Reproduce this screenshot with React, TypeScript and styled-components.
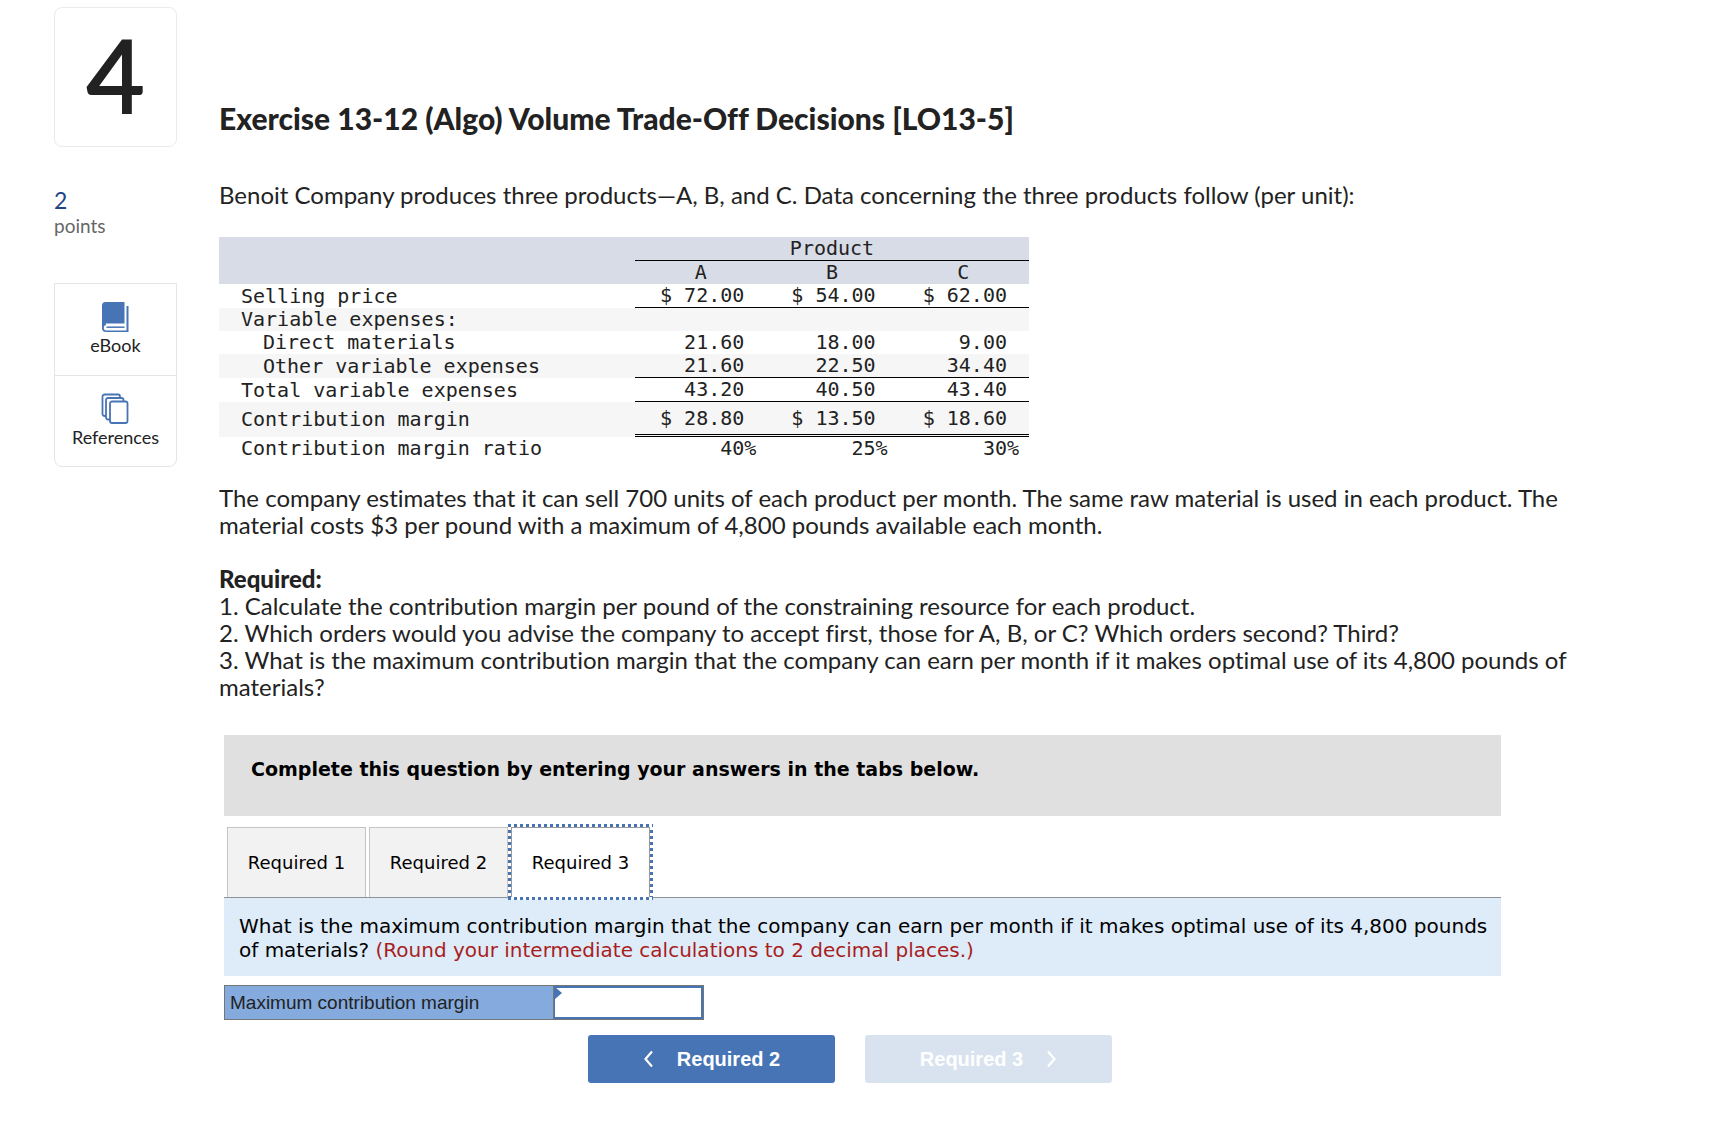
import React, { useState } from "react";
import styled, { createGlobalStyle } from "styled-components";

const sans = `Lato, "Open Sans", sans-serif`;
const verdana = `Verdana, "DejaVu Sans", sans-serif`;
const arial = `"Liberation Sans", Arial, sans-serif`;
const mono = `"DejaVu Sans Mono", monospace`;
const ink = "#222222";
const blue = "#4774b5";

const GlobalStyle = createGlobalStyle`
  *, *::before, *::after { box-sizing: border-box; }
  body {
    margin: 0;
    background: #ffffff;
    color: ${ink};
    font-family: ${sans};
    font-variant-ligatures: none;
  }
  h1, h2, h3, p { margin: 0; padding: 0; }
`;

const Page = styled.div`
  display: flex;
  align-items: flex-start;
  gap: 42px;
  padding: 7px 137px 48px 54px;
`;

const Sidebar = styled.aside`
  flex: 0 0 123px;
  display: flex;
  flex-direction: column;
`;

const QuestionNumber = styled.div`
  display: flex;
  justify-content: center;
  height: 140px;
  padding-top: 14px;
  border: 1px solid #ebebeb;
  border-radius: 8px;
  font-size: 100px;
  line-height: 104px;
  -webkit-text-stroke: 2px ${ink};
`;

const Points = styled.div`
  display: flex;
  flex-direction: column;
  margin: 40px 0 45px;
  font-size: 19px;
  line-height: 24px;
  color: #666666;
`;

const PointValue = styled.span`
  font-size: 23px;
  line-height: 27px;
  color: #1f4488;
`;

const Tools = styled.nav`
  display: flex;
  flex-direction: column;
  border: 1px solid #e5e5e5;
  border-radius: 0 0 8px 8px;
`;

const Tool = styled.button`
  display: flex;
  flex-direction: column;
  align-items: center;
  height: 91px;
  padding: 17px 0 0;
  border: 0;
  background: none;
  color: ${ink};
  font-family: ${sans};
  font-size: 18px;
  line-height: 24px;
  cursor: pointer;

  & + & {
    border-top: 1px solid #e5e5e5;
  }
`;

const Main = styled.main`
  flex: 1;
  min-width: 0;
  padding-top: 93px;
`;

const Title = styled.h1`
  font-size: 30px;
  line-height: 36px;
  font-weight: 900;
`;

const Paragraph = styled.p<{ $top?: number }>`
  margin-top: ${(p) => p.$top ?? 0}px;
  font-size: 24px;
  line-height: 27px;
`;

const RequiredHeading = styled.h2`
  margin-top: 27px;
  font-size: 24px;
  line-height: 27px;
  font-weight: 900;
`;

const DataTable = styled.table`
  width: 100%;
  max-width: 810px;
  margin: 29px 0 24px;
  table-layout: fixed;
  border-collapse: separate;
  border-spacing: 0;
  font-family: ${mono};
  font-size: 20px;
  line-height: 23px;
`;

const LabelColumn = styled.col`
  width: 416px;
`;

const Row = styled.tr<{ $shade?: boolean }>`
  background: ${(p) => (p.$shade ? "#f6f6f6" : "#ffffff")};
`;

const HeadRow = styled.tr`
  background: #d8dce6;
`;

const HeadCell = styled.th<{ $ruled?: boolean }>`
  padding: 0;
  font-weight: 400;
  text-align: center;
  border-bottom: ${(p) => (p.$ruled ? "1px solid #000" : "0")};
`;

const LabelCell = styled.th<{ $indent?: boolean }>`
  padding: 0 0 0 ${(p) => (p.$indent ? 44 : 22)}px;
  font-weight: 400;
  text-align: left;
  white-space: nowrap;
`;

type Rule = "single" | "double" | undefined;

const ValueCell = styled.td<{ $rule?: Rule; $percent?: boolean }>`
  padding: 0 ${(p) => (p.$percent ? 10 : 22)}px 0 0;
  text-align: right;
  line-height: ${(p) => (p.$rule === "double" ? 32 : 23)}px;
  border-bottom: ${(p) =>
    p.$rule === "double" ? "3px double #000" : p.$rule === "single" ? "1px solid #000" : "0"};
`;

const Worksheet = styled.section`
  margin: 35px 74px 0 5px;
  font-family: ${verdana};
  color: #000000;
`;

const Banner = styled.h3`
  min-height: 81px;
  padding: 22px 27px;
  background: #e0e0e0;
  font-size: 19px;
  line-height: 24px;
  font-weight: 700;
`;

const TabList = styled.div`
  display: flex;
  gap: 3px;
  margin-top: 11px;
  padding-left: 3px;
  border-bottom: 1px solid #8e9296;
`;

const Tab = styled.button<{ $active: boolean }>`
  position: relative;
  height: 70px;
  min-width: 139px;
  padding: 0 16px;
  border: 1px solid ${(p) => (p.$active ? "#999999" : "#c4c4c4")};
  border-bottom: 0;
  background: ${(p) => (p.$active ? "#ffffff" : "#f2f2f2")};
  color: #000000;
  font-family: ${verdana};
  font-size: 18px;
  line-height: 24px;
  cursor: pointer;
  outline: 0;

  &::after {
    content: "";
    display: ${(p) => (p.$active ? "block" : "none")};
    position: absolute;
    inset: -4px -4px -3px;
    background:
      repeating-linear-gradient(90deg, ${blue} 0 3px, #fff 3px 6px) top / 100% 3px no-repeat,
      repeating-linear-gradient(90deg, ${blue} 0 3px, #fff 3px 6px) bottom / 100% 3px no-repeat,
      repeating-linear-gradient(${blue} 0 3px, #fff 3px 6px) left / 3px 100% no-repeat,
      repeating-linear-gradient(${blue} 0 3px, #fff 3px 6px) right / 3px 100% no-repeat;
  }
`;

const Prompt = styled.div`
  padding: 16px 8px 14px 15px;
  background: #deebf8;
  font-size: 20px;
  line-height: 24px;
`;

const Hint = styled.span`
  color: #a81e1e;
`;

const AnswerRow = styled.div`
  display: flex;
  width: 480px;
  max-width: 100%;
  height: 35px;
  margin-top: 9px;
  border: 1px solid #767676;
`;

const AnswerLabel = styled.label`
  flex: 1;
  padding: 0 5px;
  background: #84aade;
  border-right: 1px solid #767676;
  color: ${ink};
  font-family: ${arial};
  font-size: 19px;
  line-height: 33px;
`;

const AnswerField = styled.div`
  position: relative;
  flex: 0 0 149px;
  display: flex;

  &::before {
    content: "";
    position: absolute;
    top: 1px;
    left: 1px;
    border-style: solid;
    border-width: 6px 0 6px 7px;
    border-color: transparent transparent transparent ${blue};
  }
`;

const AnswerInput = styled.input`
  width: 100%;
  border: 2px solid ${blue};
  border-left-width: 1px;
  border-radius: 0;
  padding: 0 10px;
  background: #ffffff;
  font-family: ${arial};
  font-size: 19px;
  text-align: right;
  outline: 0;
`;

const StepNav = styled.div`
  display: flex;
  justify-content: center;
  gap: 30px;
  margin-top: 15px;
  padding-right: 25px;
`;

const StepButton = styled.button`
  display: flex;
  align-items: center;
  justify-content: center;
  gap: 23px;
  width: 247px;
  height: 48px;
  padding: 0;
  border: 0;
  border-radius: 3px;
  background: ${blue};
  color: #ffffff;
  font-family: ${arial};
  font-size: 20px;
  font-weight: 700;
  cursor: pointer;

  &:disabled {
    background: #d9e3f0;
    cursor: default;
  }
`;

const BookIcon = () => (
  <svg width="30" height="32" viewBox="0 0 30 32" aria-hidden="true">
    <path d="M4.500 1H23.500V22.500H5Q2.500 22.500 1 24.500V4.500Q1 1 4.500 1Z" fill={blue} />
    <path d="M1 22V27Q1 31 5 31H27.500V5H25.500V29.400H5Q2.800 29.400 2.800 26.500Q2.800 24 5 24V22.500Z" fill={blue} />
    <path d="M5.500 26.200H23.500" stroke={blue} strokeWidth="1.500" />
  </svg>
);

const PagesIcon = () => (
  <svg width="30" height="32" viewBox="0 0 30 32" fill="#fff" stroke={blue} strokeWidth="1.800" aria-hidden="true">
    <rect x="1.500" y="1.500" width="17.500" height="21.500" rx="2" />
    <rect x="5" y="5" width="17.500" height="21.500" rx="2" />
    <rect x="9" y="8.500" width="17.500" height="21.500" rx="2" />
  </svg>
);

const Chevron = ({ d }: { d: string }) => (
  <svg width="11" height="18" viewBox="0 0 11 18" fill="none" stroke="#fff" strokeWidth="2.200" aria-hidden="true">
    <path d={d} />
  </svg>
);

interface Line {
  label: string;
  values: string[];
  indent?: boolean;
  shade?: boolean;
  rule?: Rule;
  percent?: boolean;
}

const lines: Line[] = [
  { label: "Selling price", values: ["$ 72.00", "$ 54.00", "$ 62.00"], rule: "single" },
  { label: "Variable expenses:", values: ["", "", ""], shade: true },
  { label: "Direct materials", values: ["21.60", "18.00", "9.00"], indent: true },
  { label: "Other variable expenses", values: ["21.60", "22.50", "34.40"], indent: true, shade: true, rule: "single" },
  { label: "Total variable expenses", values: ["43.20", "40.50", "43.40"], rule: "single" },
  { label: "Contribution margin", values: ["$ 28.80", "$ 13.50", "$ 18.60"], shade: true, rule: "double" },
  { label: "Contribution margin ratio", values: ["40%", "25%", "30%"], percent: true },
];

const tabs = ["Required 1", "Required 2", "Required 3"];

export default function App() {
  const [active, setActive] = useState(2);
  const [answer, setAnswer] = useState("");

  return (
    <>
      <GlobalStyle />
      <Page>
        <Sidebar>
          <QuestionNumber>4</QuestionNumber>
          <Points>
            <PointValue>2</PointValue>
            points
          </Points>
          <Tools>
            <Tool type="button">
              <BookIcon />
              eBook
            </Tool>
            <Tool type="button">
              <PagesIcon />
              References
            </Tool>
          </Tools>
        </Sidebar>

        <Main>
          <Title>Exercise 13-12 (Algo) Volume Trade-Off Decisions [LO13-5]</Title>
          <Paragraph $top={45}>
            Benoit Company produces three products—A, B, and C. Data concerning the three products follow (per unit):
          </Paragraph>

          <DataTable>
            <colgroup>
              <LabelColumn />
              <col />
              <col />
              <col />
            </colgroup>
            <thead>
              <HeadRow>
                <HeadCell as="td" />
                <HeadCell colSpan={3} $ruled>Product</HeadCell>
              </HeadRow>
              <HeadRow>
                <HeadCell as="td" />
                <HeadCell>A</HeadCell>
                <HeadCell>B</HeadCell>
                <HeadCell>C</HeadCell>
              </HeadRow>
            </thead>
            <tbody>
              {lines.map((line) => (
                <Row key={line.label} $shade={line.shade}>
                  <LabelCell scope="row" $indent={line.indent}>{line.label}</LabelCell>
                  {line.values.map((value, i) => (
                    <ValueCell key={i} $rule={line.rule} $percent={line.percent}>{value}</ValueCell>
                  ))}
                </Row>
              ))}
            </tbody>
          </DataTable>

          <Paragraph>
            The company estimates that it can sell 700 units of each product per month. The same raw material is used
            in each product. The material costs $3 per pound with a maximum of 4,800 pounds available each month.
          </Paragraph>

          <RequiredHeading>Required:</RequiredHeading>
          <Paragraph>1. Calculate the contribution margin per pound of the constraining resource for each product.</Paragraph>
          <Paragraph>
            2. Which orders would you advise the company to accept first, those for A, B, or C? Which orders second? Third?
          </Paragraph>
          <Paragraph>
            3. What is the maximum contribution margin that the company can earn per month if it makes optimal use of
            its 4,800 pounds of materials?
          </Paragraph>

          <Worksheet>
            <Banner>Complete this question by entering your answers in the tabs below.</Banner>
            <TabList role="tablist">
              {tabs.map((tab, i) => (
                <Tab
                  key={tab}
                  type="button"
                  role="tab"
                  aria-selected={i === active}
                  $active={i === active}
                  onClick={() => setActive(i)}
                >
                  {tab}
                </Tab>
              ))}
            </TabList>
            <Prompt>
              What is the maximum contribution margin that the company can earn per month if it makes optimal use of
              its 4,800 pounds of materials? <Hint>(Round your intermediate calculations to 2 decimal places.)</Hint>
            </Prompt>
            <AnswerRow>
              <AnswerLabel htmlFor="max-margin">Maximum contribution margin</AnswerLabel>
              <AnswerField>
                <AnswerInput id="max-margin" value={answer} onChange={(e) => setAnswer(e.target.value)} />
              </AnswerField>
            </AnswerRow>
            <StepNav>
              <StepButton type="button" onClick={() => setActive(1)}>
                <Chevron d="M9 1.500L2.500 9L9 16.500" />
                Required 2
              </StepButton>
              <StepButton type="button" disabled>
                Required 3
                <Chevron d="M2 1.500L8.500 9L2 16.500" />
              </StepButton>
            </StepNav>
          </Worksheet>
        </Main>
      </Page>
    </>
  );
}
